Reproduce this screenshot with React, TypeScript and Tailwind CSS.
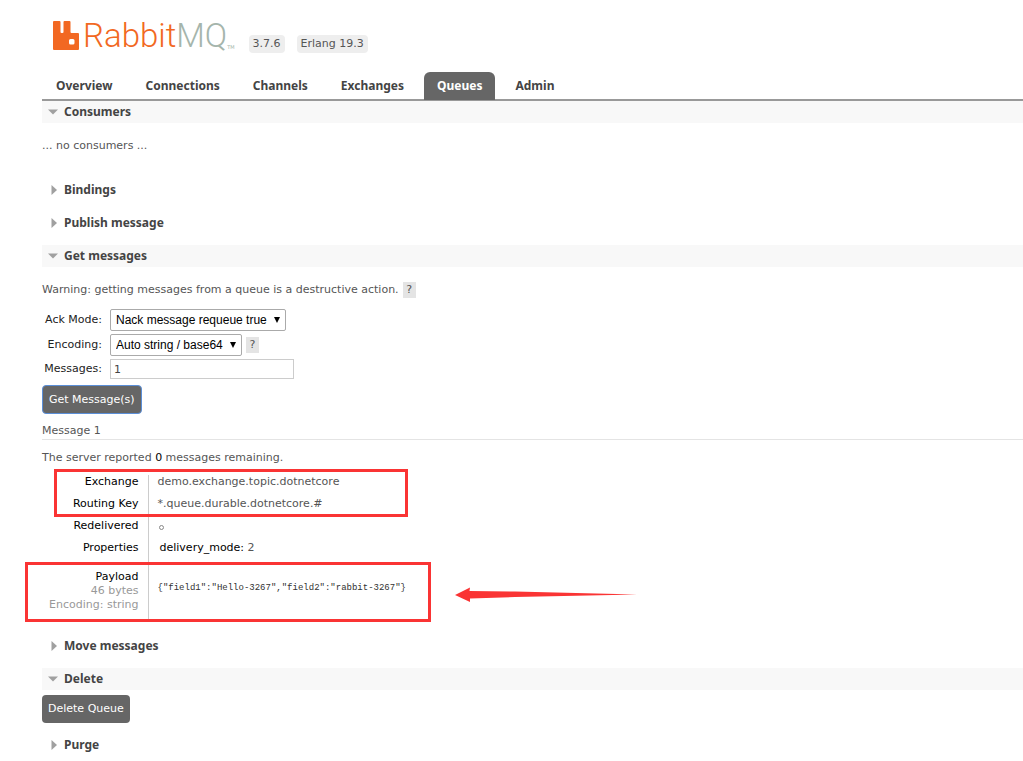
import { useState } from 'react';
import type { ReactNode } from 'react';

const tabs = ['Overview', 'Connections', 'Channels', 'Exchanges', 'Queues', 'Admin'];

function Logo() {
  return (
    <a href="#overview" aria-label="RabbitMQ" className="flex items-end text-[#f26822]">
      <svg viewBox="0 0 26 29" className="w-[26px] h-[29px] mb-[3px]" fill="currentColor">
        <path
          fillRule="evenodd"
          d="M1 0H6.500a1 1 0 0 1 1 1v10a1 1 0 0 0 1 1h1a1 1 0 0 0 1-1V1a1 1 0 0 1 1-1H16.500a1 1 0 0 1 1 1v10a1 1 0 0 0 1 1H25a1 1 0 0 1 1 1v15a1 1 0 0 1-1 1H1a1 1 0 0 1-1-1V1a1 1 0 0 1 1-1zM17.500 18a1.500 1.500 0 0 0-1.500 1.500v2.500a1.500 1.500 0 0 0 1.500 1.500h2.500a1.500 1.500 0 0 0 1.500-1.500v-2.500a1.500 1.500 0 0 0-1.500-1.500z"
        />
      </svg>
      <span className="ml-1 text-[33px] leading-[34px] font-light font-[Roboto,sans-serif]">
        Rabbit<span className="text-[#a5b5ac]">MQ</span>
      </span>
      <span className="pb-0.5 text-[5px] leading-2 text-[#a5b5ac]">TM</span>
    </a>
  );
}

function Section({ title, open, children }: { title: string; open?: boolean; children?: ReactNode }) {
  const [visible, setVisible] = useState(!!open);

  return (
    <section className="mb-[11px]">
      <h2 className={visible ? 'bg-[#f8f8f8]' : ''}>
        <button
          onClick={() => setVisible(!visible)}
          className="flex items-center w-full h-[22px] pl-1.5 gap-1.5 text-[12px] font-bold text-[#444] font-['Noto_Sans',sans-serif]"
        >
          <svg viewBox="0 0 10 10" className="w-2.5 h-2.5" fill="#a0a0a0">
            {visible ? <path d="M0 2.500h10L5 7.500z" /> : <path d="M3.500 0v10l5.500-5z" />}
          </svg>
          {title}
        </button>
      </h2>
      {visible && children}
    </section>
  );
}

function Help() {
  return <button aria-label="Help" className="w-[13px] h-4 leading-4 text-center bg-[#e4e4e4] text-[#555]">?</button>;
}

function Select({ id, value }: { id: string; value: string }) {
  return (
    <div className="relative w-fit">
      <select
        id={id}
        className="appearance-none h-[22px] pl-[5px] pr-[18px] border border-[#aaa] rounded-xs bg-white text-black text-[12px] font-['Liberation_Sans',sans-serif]"
      >
        <option>{value}</option>
      </select>
      <svg viewBox="0 0 6 6" className="absolute right-1.5 top-2 w-1.5 h-1.5 pointer-events-none">
        <path d="M0 0h6L3 6z" />
      </svg>
    </div>
  );
}

function Row({ label, children }: { label: string; children: ReactNode }) {
  return (
    <tr className="h-[22px] align-top">
      <th className="w-[106px] pr-[9px] text-right font-normal text-black border-r border-[#ccc]">{label}</th>
      <td className="pl-[9px]">{children}</td>
    </tr>
  );
}

export default function App() {
  const [activeTab, setActiveTab] = useState('Queues');

  return (
    <div className="min-h-screen bg-white pl-[42px] text-[11px] leading-[14px] text-[#555] font-['DejaVu_Sans',sans-serif]">
      <header className="flex items-end gap-3 h-[53px] pl-[11px]">
        <Logo />
        <span className="ml-0.5 px-1 h-[18px] leading-[18px] rounded bg-[#eee]">3.7.6</span>
        <span className="px-1 h-[18px] leading-[18px] rounded bg-[#eee]">Erlang 19.3</span>
      </header>

      <nav className="flex gap-[7px] h-12 items-end pl-px border-b-2 border-[#999] text-[12px] font-['Noto_Sans',sans-serif]">
        {tabs.map((tab) => (
          <a
            key={tab}
            href={`#${tab.toLowerCase()}`}
            onClick={() => setActiveTab(tab)}
            className={`-mb-px px-[13px] h-[28px] leading-[28px] rounded-t-md font-bold ${activeTab === tab ? 'bg-[#666] text-white' : 'text-[#444]'}`}
          >
            {tab}
          </a>
        ))}
      </nav>

      <main>
        <Section title="Consumers" open>
          <p className="pt-4 pb-[15px]">... no consumers ...</p>
        </Section>
        <Section title="Bindings" />
        <Section title="Publish message" />

        <Section title="Get messages" open>
          <div className="flex items-center gap-1 mt-[15px] mb-[11px]">
            <p>Warning: getting messages from a queue is a destructive action.</p>
            <Help />
          </div>

          <form onSubmit={(e) => e.preventDefault()}>
            <div className="grid grid-cols-[60px_1fr] gap-x-2 gap-y-[3px] items-center text-[#222]">
              <label htmlFor="ackmode" className="text-right">Ack Mode:</label>
              <Select id="ackmode" value="Nack message requeue true" />
              <label htmlFor="encoding" className="text-right">Encoding:</label>
              <div className="flex items-center gap-1">
                <Select id="encoding" value="Auto string / base64" />
                <Help />
              </div>
              <label htmlFor="count" className="text-right">Messages:</label>
              <input id="count" defaultValue="1" className="w-[184px] h-5 px-[3px] border border-[#ccc] text-[#444]" />
            </div>
            <button className="mt-1.5 h-[29px] px-1.5 rounded border border-[#5b8fd8] bg-[#666] text-white">
              Get Message(s)
            </button>
          </form>

          <div className="relative mb-[15px]">
            <h3 className="mt-2.5 pb-px border-b border-[#e4e4e4]">Message 1</h3>
            <p className="mt-[11px] mb-2.5">
              The server reported <span className="text-black">0</span> messages remaining.
            </p>
            <table className="border-collapse">
              <tbody>
                <Row label="Exchange">demo.exchange.topic.dotnetcore</Row>
                <Row label="Routing Key">*.queue.durable.dotnetcore.#</Row>
                <Row label="Redelivered">
                  <span className="block w-[5px] h-[5px] mt-1.5 ml-px rounded-full border border-[#888]" />
                </Row>
                <Row label="Properties">
                  <span className="pl-0.5 text-black">delivery_mode:</span> 2
                </Row>
                <tr className="h-[57px] align-top">
                  <th className="pt-[7px] pr-[9px] text-right font-normal text-black border-r border-[#ccc]">
                    Payload
                    <div className="text-[#999]">46 bytes</div>
                    <div className="text-[#999]">Encoding: string</div>
                  </th>
                  <td className="pl-[9px] pt-[18px]">
                    <pre className="text-[9px] text-[#333] font-['Liberation_Mono',monospace]">
                      {'{"field1":"Hello-3267","field2":"rabbit-3267"}'}
                    </pre>
                  </td>
                </tr>
              </tbody>
            </table>

            {/* highlights drawn over the message */}
            <div className="absolute left-3 top-[45px] w-[354px] h-12 border-3 border-[#fa3434]" />
            <div className="absolute -left-[17px] top-[138px] w-[406px] h-[60px] border-3 border-[#fa3434]" />
            <svg viewBox="0 0 182 16" className="absolute left-[413px] top-[163px] w-[182px] h-4" fill="#fa3434">
              <path d="M0 8L15 0.500L14.500 4L60 4.500L182 7.500L60 10L15 11.500V15z" />
            </svg>
          </div>
        </Section>

        <Section title="Move messages" />
        <Section title="Delete" open>
          <button className="block mt-[5px] h-[28px] px-1.5 rounded bg-[#666] text-white">Delete Queue</button>
        </Section>
        <Section title="Purge" />
      </main>
    </div>
  );
}
